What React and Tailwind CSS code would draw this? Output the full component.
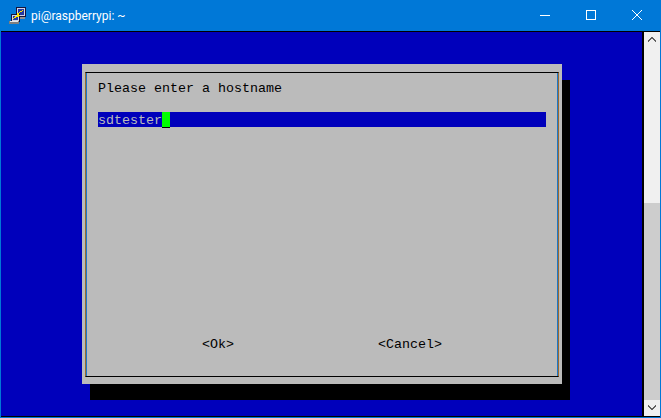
const PuttyIcon = () => (
  <svg width="18" height="18" viewBox="0 0 18 18" shapeRendering="crispEdges">
    {/* back computer */}
    <rect x="7" y="0" width="10" height="10" fill="#14143a" />
    <rect x="8" y="1" width="8" height="8" fill="#cfd3e6" />
    <rect x="9" y="2" width="6" height="6" fill="#2438a0" />
    <rect x="7" y="10" width="9" height="2" fill="#8f8f8f" />
    {/* front computer */}
    <rect x="2" y="7" width="9" height="8" fill="#14143a" />
    <rect x="3" y="8" width="7" height="6" fill="#cfd3e6" />
    <rect x="4" y="9" width="5" height="4" fill="#2438a0" />
    <rect x="0" y="14" width="10" height="3" fill="#7f7f7f" />
    <rect x="1" y="14" width="8" height="1" fill="#e6e6e6" />
    {/* bolt */}
    <path d="M14 3 L7 7 L9 8 L4 11 L4 12 L11 9 L9 7 L14 4 Z" fill="#ffe600" />
  </svg>
);

const WindowButtons = () => (
  <div className="flex items-start mr-px text-white self-start">
    <div className="w-[46px] h-[30px] flex items-center justify-center">
      <div className="w-[10px] h-px bg-white" />
    </div>
    <div className="w-[46px] h-[30px] flex items-center justify-center">
      <div className="w-[10px] h-[10px] border border-white" />
    </div>
    <div className="w-[46px] h-[30px] flex items-center justify-center">
      <svg width="10" height="10" viewBox="0 0 10 10">
        <path d="M0 0 L10 10 M10 0 L0 10" stroke="#fff" strokeWidth="1" fill="none" />
      </svg>
    </div>
  </div>
);

const ScrollArrow = ({ up }) => (
  <div className="h-4 bg-[#f0f0f0] flex items-center justify-center">
    <svg width="8" height="6" viewBox="0 0 8 6" shapeRendering="crispEdges" fill="#606060">
      {up ? (
        <path d="M3 0h2v1h1v1h1v1h1v2h-1v-1h-1v-1h-1v-1h-2v1h-1v1h-1v1h-1v-2h1v-1h1v-1h1z" />
      ) : (
        <path d="M0 0h1v1h1v1h1v1h2v-1h1v-1h1v-1h1v2h-1v1h-1v1h-1v1h-2v-1h-1v-1h-1v-1h-1z" />
      )}
    </svg>
  </div>
);

const App = () => {
  return (
    <div className="w-[661px] h-[418px] bg-[#0078d7] flex flex-col overflow-hidden">
      <div className="h-[31px] flex items-center justify-between shrink-0">
        <div className="flex items-center">
          <div className="ml-[9px] mr-[4px] flex"><PuttyIcon /></div>
          <span className="text-white text-[12px] font-['Roboto',sans-serif]">pi@raspberrypi: ~</span>
        </div>
        <WindowButtons />
      </div>

      <div className="flex-1 min-h-0 flex mx-px mb-px bg-black pb-px">
        <div className="flex-1 flex flex-col">
          <div className="h-px" />
          <div className="flex-1 bg-[#0000bb] pl-[81px] pt-[32px] mr-[2px]">
            <div className="w-[480px] h-[320px] bg-[#bbbbbb] shadow-[8px_16px_0_#000] pt-[8px] px-[3px] pb-[7px] flex">
              <div className="flex-1 flex flex-col border border-t-black border-b-black border-l-[#9a6a30] border-r-[#9a6a30] shadow-[inset_1px_0_0_#1e78c8,inset_-1px_0_0_#1e78c8] pt-[8px] pl-[12px] pb-[23px] text-[13.33px] leading-4 text-black font-['Liberation_Mono',monospace]">
                <div className="h-4">Please enter a hostname</div>
                <div className="mt-[15px] w-[448px] h-[15px] bg-[#0000bb] flex text-[#bbbbbb]">
                  <span className="pt-px">sdtester</span>
                  <span className="w-2 h-4 bg-[#00ff00] border-b border-black" />
                </div>
                <div className="mt-auto ml-[104px] flex gap-[144px]">
                  <span>&lt;Ok&gt;</span>
                  <span>&lt;Cancel&gt;</span>
                </div>
              </div>
            </div>
          </div>
        </div>

        <div className="w-[16px] flex flex-col bg-[#f0f0f0]">
          <div className="h-px bg-black" />
          <ScrollArrow up />
          <div className="h-[155px]" />
          <div className="flex-1 bg-[#cdcdcd]" />
          <ScrollArrow />
        </div>
      </div>
    </div>
  );
};

export default App;
